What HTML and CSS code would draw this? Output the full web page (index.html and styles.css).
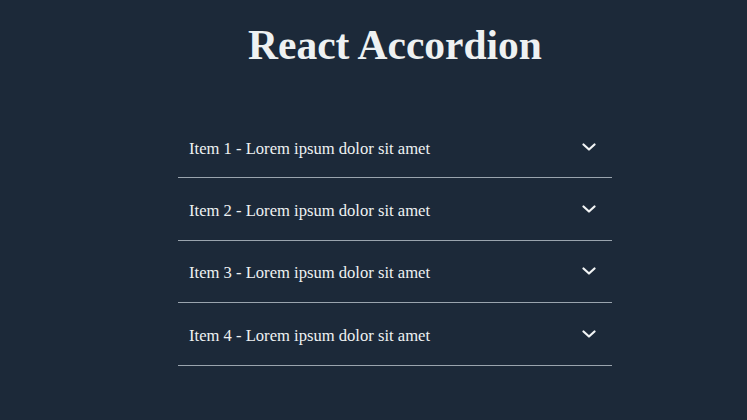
FILE: index.html
```html
<!DOCTYPE html>
<html lang="en">
<head>
  <meta charset="UTF-8">
  <title>React Accordion</title>
  <link rel="stylesheet" href="styles.css">
</head>
<body>
  <div class="app">
    <h1 class="title">React Accordion</h1>
    <div class="accordion">
      <div class="accordion-item">
        <span class="accordion-label">Item 1 - Lorem ipsum dolor sit amet</span>
        <svg class="chevron" viewBox="0 0 14 8"><path d="M1.5 1.5 L7 6.5 L12.5 1.5"/></svg>
      </div>
      <div class="accordion-item">
        <span class="accordion-label">Item 2 - Lorem ipsum dolor sit amet</span>
        <svg class="chevron" viewBox="0 0 14 8"><path d="M1.5 1.5 L7 6.5 L12.5 1.5"/></svg>
      </div>
      <div class="accordion-item">
        <span class="accordion-label">Item 3 - Lorem ipsum dolor sit amet</span>
        <svg class="chevron" viewBox="0 0 14 8"><path d="M1.5 1.5 L7 6.5 L12.5 1.5"/></svg>
      </div>
      <div class="accordion-item">
        <span class="accordion-label">Item 4 - Lorem ipsum dolor sit amet</span>
        <svg class="chevron" viewBox="0 0 14 8"><path d="M1.5 1.5 L7 6.5 L12.5 1.5"/></svg>
      </div>
    </div>
  </div>
</body>
</html>
```

FILE: styles.css
```css
body {
  margin: 0;
  height: 100vh;
  background: #1c2939;
  color: #eef1f2;
  font-family: "Liberation Serif", "Times New Roman", serif;
}
.app {
  display: flex;
  flex-direction: column;
  align-items: center;
  padding: 22px 0 0 43px;
}
.title {
  margin: 0;
  font-size: 41.5px;
  line-height: 46px;
  font-weight: bold;
}
.accordion {
  width: 434px;
  margin-top: 48px;
}
.accordion-item {
  display: flex;
  align-items: center;
  justify-content: space-between;
  height: 61.4px;
  padding: 0 16px 0 11px;
  border-bottom: 1px solid #9aa4ae;
  cursor: pointer;
}
.accordion-label {
  font-size: 16.6px;
  margin-top: 4px;
}
.chevron {
  width: 14px;
  height: 8px;
  margin-top: 0;
  fill: none;
  stroke: #f2f4f5;
  stroke-width: 2.2;
  stroke-linecap: round;
  stroke-linejoin: round;
}
```
